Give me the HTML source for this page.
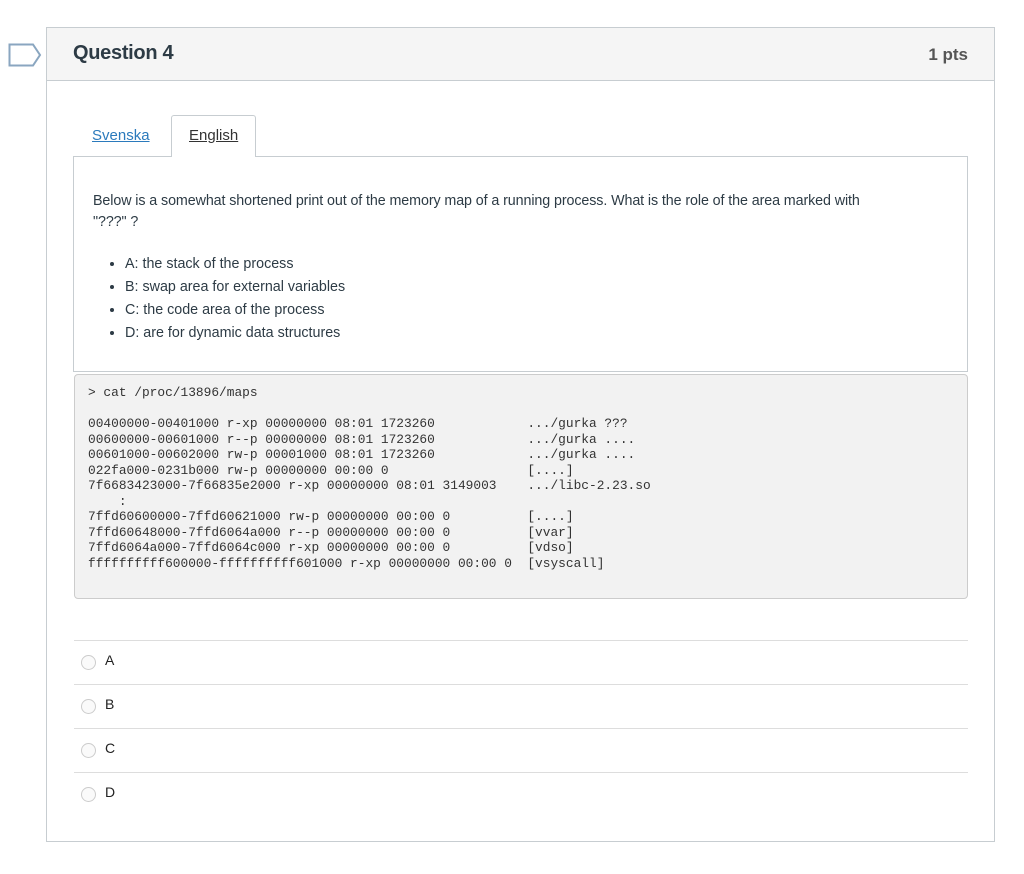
<!DOCTYPE html>
<html><head><style>
*{box-sizing:border-box;margin:0;padding:0}
body{width:1024px;height:874px;background:#fff;font-family:"Liberation Sans",sans-serif;color:#2d3b45;position:relative;overflow:hidden}
.abs{position:absolute}
.q{left:46px;top:27px;width:949px;height:815px;border:1px solid #c7cdd1}
.hdr{left:0;top:0;width:947px;height:53px;background:#f5f5f5;border-bottom:1px solid #c7cdd1}
.title{left:26px;top:14px;font-size:20px;font-weight:bold;color:#2d3b45;letter-spacing:-0.3px}
.pts{right:26px;top:17px;font-size:17px;font-weight:bold;color:#555}
.tabs a{position:absolute;font-size:15px;text-decoration:underline}
.content{left:26px;top:128px;width:895px;height:216px;border:1px solid #c7cdd1;border-top:1px solid #c7cdd1}
.content p{position:absolute;left:19px;top:34px;width:850px;font-size:14.3px;line-height:21px;color:#2d3b45;letter-spacing:-0.1px}
.content ul{position:absolute;left:51px;top:96px;font-size:14.3px;line-height:23px;list-style:disc}
pre{position:absolute;left:27px;top:346px;width:894px;height:225px;background:#f2f2f2;border:1px solid #ccc;border-radius:4px;font-family:"Liberation Mono",monospace;font-size:12.85px;line-height:15.5px;padding:10px 13px;color:#333}
.ans{position:absolute;left:27px;width:894px;height:44px;border-top:1px solid #ddd;font-size:14px;color:#222}
.ans span.r{position:absolute;left:7px;top:14px;width:15px;height:15px;border:1px solid #ccc;border-radius:50%;background:#fafafa}
.ans span.t{position:absolute;left:31px;top:11px}
</style></head><body>
<svg class="abs" style="left:8px;top:43px" width="34" height="24"><path d="M1.5 1.5H25L32 12 25 22.5H1.5Z" fill="none" stroke="#8aa6c0" stroke-width="2"/></svg>
<div class="abs q">
 <div class="abs hdr"><div class="abs title">Question 4</div><div class="abs pts">1 pts</div></div>
 <div class="tabs">
  <a class="abs" style="left:45px;top:99px;color:#2b7abc">Svenska</a>
  <div class="abs" style="left:124px;top:87px;width:85px;height:42px;border:1px solid #c7cdd1;border-bottom:none;border-radius:3px 3px 0 0;background:#fff;z-index:2"></div>
  <a class="abs" style="left:142px;top:99px;color:#333;z-index:3">English</a>
 </div>
 <div class="abs content"><p>Below is a somewhat shortened print out of the memory map of a running process. What is the role of the area marked with<br>"???" ?</p>
 <ul><li>A: the stack of the process</li><li>B: swap area for external variables</li><li>C: the code area of the process</li><li>D: are for dynamic data structures</li></ul></div>
<pre>&gt; cat /proc/13896/maps

00400000-00401000 r-xp 00000000 08:01 1723260            .../gurka ???
00600000-00601000 r--p 00000000 08:01 1723260            .../gurka ....
00601000-00602000 rw-p 00001000 08:01 1723260            .../gurka ....
022fa000-0231b000 rw-p 00000000 00:00 0                  [....]
7f6683423000-7f66835e2000 r-xp 00000000 08:01 3149003    .../libc-2.23.so
    :
7ffd60600000-7ffd60621000 rw-p 00000000 00:00 0          [....]
7ffd60648000-7ffd6064a000 r--p 00000000 00:00 0          [vvar]
7ffd6064a000-7ffd6064c000 r-xp 00000000 00:00 0          [vdso]
ffffffffff600000-ffffffffff601000 r-xp 00000000 00:00 0  [vsyscall]</pre>
 <div class="ans" style="top:612px"><span class="r"></span><span class="t">A</span></div>
 <div class="ans" style="top:656px"><span class="r"></span><span class="t">B</span></div>
 <div class="ans" style="top:700px"><span class="r"></span><span class="t">C</span></div>
 <div class="ans" style="top:744px"><span class="r"></span><span class="t">D</span></div>
</div>
</body></html>
